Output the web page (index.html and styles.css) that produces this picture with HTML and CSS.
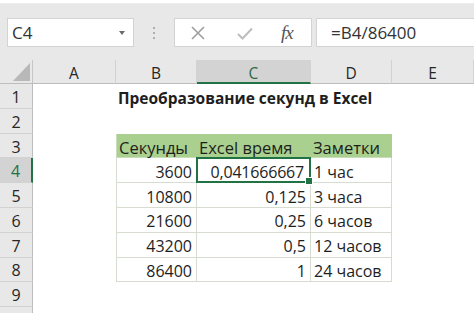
FILE: index.html
```html
<!DOCTYPE html>
<html lang="ru">
<head>
<meta charset="utf-8">
<link rel="stylesheet" href="styles.css">
</head>
<body>
<div class="app">
  <div class="strip"></div>
  <div class="fbar">
    <div class="namebox"><span class="nb-text">C4</span><span class="caret"></span></div>
    <div class="grip"><i></i><i></i><i></i></div>
    <div class="fbtns">
      <svg class="ic-x" width="14" height="14" viewBox="0 0 14 14"><path d="M1 1L13 13M13 1L1 13" stroke="#9e9e9e" stroke-width="1.6" fill="none"/></svg>
      <svg class="ic-ok" width="16" height="13" viewBox="0 0 16 13"><path d="M1 7L5.5 11.5L15 1.5" stroke="#bdbdbd" stroke-width="2" fill="none"/></svg>
      <span class="fx">fx</span>
    </div>
    <div class="formula">=B4/86400</div>
  </div>
  <div class="sheet">
    <div class="corner"><span class="tri"></span></div>
    <div class="ch">A</div>
    <div class="ch">B</div>
    <div class="ch ch-sel">C</div>
    <div class="ch">D</div>
    <div class="ch">E</div>

    <div class="rh">1</div>
    <div class="c"></div>
    <div class="c title">Преобразование секунд в Excel</div>
    <div class="c"></div>

    <div class="rh">2</div>
    <div class="c"></div><div class="c"></div><div class="c"></div><div class="c"></div><div class="c"></div>

    <div class="rh">3</div>
    <div class="c"></div>
    <div class="c th first">Секунды</div>
    <div class="c th">Excel время</div>
    <div class="c th">Заметки</div>
    <div class="c"></div>

    <div class="rh rh-sel">4</div>
    <div class="c"></div>
    <div class="c td first num">3600</div>
    <div class="c td num active">0,041666667</div>
    <div class="c td txt">1 час</div>
    <div class="c"></div>

    <div class="rh">5</div>
    <div class="c"></div>
    <div class="c td first num">10800</div>
    <div class="c td num">0,125</div>
    <div class="c td txt">3 часа</div>
    <div class="c"></div>

    <div class="rh">6</div>
    <div class="c"></div>
    <div class="c td first num">21600</div>
    <div class="c td num">0,25</div>
    <div class="c td txt">6 часов</div>
    <div class="c"></div>

    <div class="rh">7</div>
    <div class="c"></div>
    <div class="c td first num">43200</div>
    <div class="c td num">0,5</div>
    <div class="c td txt">12 часов</div>
    <div class="c"></div>

    <div class="rh">8</div>
    <div class="c"></div>
    <div class="c td first num">86400</div>
    <div class="c td num">1</div>
    <div class="c td txt">24 часов</div>
    <div class="c"></div>

    <div class="rh">9</div>
    <div class="c"></div><div class="c"></div><div class="c"></div><div class="c"></div><div class="c"></div>

    <div class="rh"></div>
    <div class="c"></div><div class="c"></div><div class="c"></div><div class="c"></div><div class="c"></div>
  </div>
</div>
</body>
</html>
```

FILE: styles.css
```css
* { box-sizing: border-box; }
html, body { margin: 0; padding: 0; background: #fff; }
body { font-family: "Open Sans", "Noto Sans", sans-serif; color: #1e1e1e; }
.app { width: 474px; height: 313px; overflow: hidden; }

.strip { height: 4px; background: #fff; border-bottom: 1px solid #ececec; }

.fbar {
  height: 56px;
  background: #e8e8e8;
  display: flex;
  align-items: flex-start;
  padding: 14px 0 0 7px;
}
.namebox {
  width: 127px; height: 29px;
  background: #fff;
  border: 1px solid #d3d3d3;
  display: flex; align-items: center; justify-content: space-between;
  padding: 0 8px 0 4px;
  font-size: 17px;
  color: #333;
}
.caret {
  width: 0; height: 0;
  border-left: 3.5px solid transparent;
  border-right: 3.5px solid transparent;
  border-top: 4px solid #6b6b6b;
}
.grip {
  width: 40px; height: 29px;
  display: flex; flex-direction: column; align-items: center; justify-content: center; gap: 3px;
}
.grip i { width: 2px; height: 2px; background: #9a9a9a; border-radius: 1px; display: block; }
.fbtns {
  width: 138px; height: 29px;
  background: #fff;
  border: 1px solid #d3d3d3;
  display: flex; align-items: center;
  padding-left: 16px;
}
.ic-x { margin-right: 32px; }
.ic-ok { margin-right: 28px; margin-top: 2px; }
.fx {
  font-family: "Liberation Serif", "DejaVu Serif", serif;
  font-style: italic;
  font-size: 19px;
  color: #555;
  letter-spacing: -1px;
}
.formula {
  flex: 1;
  margin-left: 4px;
  height: 29px;
  background: #fff;
  border: 1px solid #d3d3d3;
  border-right: none;
  display: flex; align-items: center;
  padding-left: 14px;
  font-size: 17px;
  color: #333;
}

.sheet {
  display: grid;
  grid-template-columns: 33px 83px 81px 114px 81px 82px;
  grid-template-rows: 24px repeat(9, 24.8px) 20px;
}
.corner {
  background: #e8e8e8;
  border-right: 1px solid #c6c6c6;
  border-bottom: 1px solid #bdbdbd;
  position: relative;
}
.tri {
  position: absolute; right: 2px; bottom: 2px;
  width: 17px; height: 18px;
  background: #b8b8b8;
  clip-path: polygon(100% 0, 100% 100%, 0 100%);
}
.ch {
  background: #e8e8e8;
  border-right: 1px solid #d2d2d2;
  border-bottom: 1px solid #bdbdbd;
  display: flex; align-items: center; justify-content: center;
  font-size: 15.5px;
  color: #262626;
  padding-top: 3px;
}
.ch-sel {
  background: #d3d3d3;
  border-bottom: 2px solid #217346;
  color: #2b6a45;
}
.rh {
  background: #e8e8e8;
  border-right: 1px solid #bdbdbd;
  border-bottom: 1px solid #d2d2d2;
  display: flex; align-items: center; justify-content: center;
  font-size: 16px;
  color: #262626;
  padding-top: 2px;
}
.rh-sel {
  background: #d3d3d3;
  border-right: 2px solid #217346;
  color: #217346;
}
.c {
  background: #fff;
  font-size: 16px;
  display: flex; align-items: center;
  white-space: nowrap;
  padding-top: 3px;
}
.title {
  grid-column: span 3;
  font-weight: 700;
  padding-left: 2px;
  font-size: 15.5px;
}
.th {
  background: #a9d08e;
  border-right: 1px solid #a9d08e;
  border-bottom: 1px solid #c9ddbb;
  padding-left: 2px;
  font-size: 16.5px;
}
.th.first { border-left: 1px solid #c9ddbb; }
.td {
  border-right: 1px solid #d6ddd0;
  border-bottom: 1px solid #d6ddd0;
}
.td.first { border-left: 1px solid #d6ddd0; }
.num { justify-content: flex-end; padding-right: 4px; }
.txt { padding-left: 3px; }
.active {
  position: relative;
  border: 2px solid #217346;
  margin: -1px 0 0 -1px;
  padding-right: 5px;
  letter-spacing: -0.2px;
}
.active::after {
  content: "";
  position: absolute;
  right: -4px; bottom: -4px;
  width: 6px; height: 6px;
  background: #217346;
  border: 1px solid #fff;
}
```
